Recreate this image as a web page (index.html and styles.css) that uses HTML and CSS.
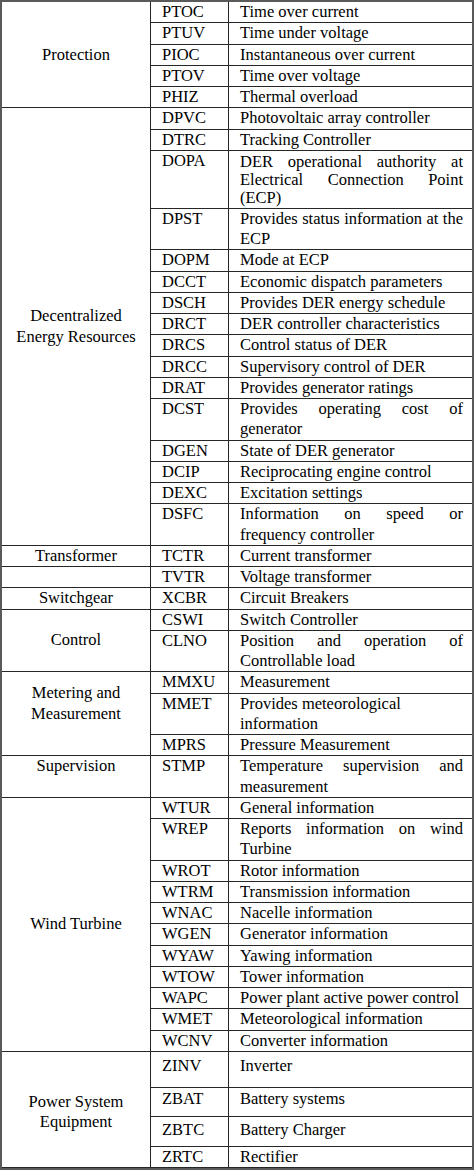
FILE: index.html
```html
<!DOCTYPE html>
<html lang="en">
<head>
<meta charset="utf-8">
<title>Logical nodes</title>
<link rel="stylesheet" href="styles.css">
</head>
<body>
<table class="ln-table">
  <colgroup>
    <col class="col-cat">
    <col class="col-code">
    <col class="col-desc">
  </colgroup>
  <tbody>
    <tr><td class="cat" rowspan="5">Protection</td><td class="code">PTOC</td><td class="desc">Time over current</td></tr>
    <tr><td class="code">PTUV</td><td class="desc">Time under voltage</td></tr>
    <tr><td class="code">PIOC</td><td class="desc">Instantaneous over current</td></tr>
    <tr><td class="code">PTOV</td><td class="desc">Time over voltage</td></tr>
    <tr><td class="code">PHIZ</td><td class="desc">Thermal overload</td></tr>

    <tr><td class="cat" rowspan="16">Decentralized Energy Resources</td><td class="code">DPVC</td><td class="desc">Photovoltaic array controller</td></tr>
    <tr><td class="code">DTRC</td><td class="desc">Tracking Controller</td></tr>
    <tr><td class="code">DOPA</td><td class="desc tight">DER operational authority at Electrical Connection Point (ECP)</td></tr>
    <tr><td class="code">DPST</td><td class="desc">Provides status information at the ECP</td></tr>
    <tr><td class="code">DOPM</td><td class="desc">Mode at ECP</td></tr>
    <tr><td class="code">DCCT</td><td class="desc">Economic dispatch parameters</td></tr>
    <tr><td class="code">DSCH</td><td class="desc">Provides DER energy schedule</td></tr>
    <tr><td class="code">DRCT</td><td class="desc">DER controller characteristics</td></tr>
    <tr><td class="code">DRCS</td><td class="desc">Control status of DER</td></tr>
    <tr><td class="code">DRCC</td><td class="desc">Supervisory control of DER</td></tr>
    <tr><td class="code">DRAT</td><td class="desc">Provides generator ratings</td></tr>
    <tr><td class="code">DCST</td><td class="desc">Provides operating cost of generator</td></tr>
    <tr><td class="code">DGEN</td><td class="desc">State of DER generator</td></tr>
    <tr><td class="code">DCIP</td><td class="desc">Reciprocating engine control</td></tr>
    <tr><td class="code">DEXC</td><td class="desc">Excitation settings</td></tr>
    <tr><td class="code">DSFC</td><td class="desc">Information on speed or frequency controller</td></tr>

    <tr><td class="cat">Transformer</td><td class="code">TCTR</td><td class="desc">Current transformer</td></tr>
    <tr><td class="cat"></td><td class="code">TVTR</td><td class="desc">Voltage transformer</td></tr>
    <tr><td class="cat">Switchgear</td><td class="code">XCBR</td><td class="desc">Circuit Breakers</td></tr>

    <tr><td class="cat" rowspan="2">Control</td><td class="code">CSWI</td><td class="desc">Switch Controller</td></tr>
    <tr><td class="code">CLNO</td><td class="desc">Position and operation of Controllable load</td></tr>

    <tr><td class="cat trail" rowspan="3">Metering and Measurement</td><td class="code">MMXU</td><td class="desc">Measurement</td></tr>
    <tr><td class="code">MMET</td><td class="desc ragged">Provides meteorological information</td></tr>
    <tr><td class="code">MPRS</td><td class="desc">Pressure Measurement</td></tr>

    <tr><td class="cat trail">Supervision</td><td class="code">STMP</td><td class="desc">Temperature supervision and measurement</td></tr>

    <tr><td class="cat" rowspan="11">Wind Turbine</td><td class="code">WTUR</td><td class="desc">General information</td></tr>
    <tr><td class="code">WREP</td><td class="desc">Reports information on wind Turbine</td></tr>
    <tr><td class="code">WROT</td><td class="desc">Rotor information</td></tr>
    <tr><td class="code">WTRM</td><td class="desc">Transmission information</td></tr>
    <tr><td class="code">WNAC</td><td class="desc">Nacelle information</td></tr>
    <tr><td class="code">WGEN</td><td class="desc">Generator information</td></tr>
    <tr><td class="code">WYAW</td><td class="desc">Yawing information</td></tr>
    <tr><td class="code">WTOW</td><td class="desc">Tower information</td></tr>
    <tr><td class="code">WAPC</td><td class="desc">Power plant active power control</td></tr>
    <tr><td class="code">WMET</td><td class="desc">Meteorological information</td></tr>
    <tr><td class="code">WCNV</td><td class="desc">Converter information</td></tr>

    <tr class="row-zinv"><td class="cat lowered" rowspan="4">Power System Equipment</td><td class="code">ZINV</td><td class="desc">Inverter</td></tr>
    <tr class="row-zbat"><td class="code">ZBAT</td><td class="desc">Battery systems</td></tr>
    <tr class="row-zbtc"><td class="code">ZBTC</td><td class="desc">Battery Charger</td></tr>
    <tr><td class="code">ZRTC</td><td class="desc">Rectifier</td></tr>
  </tbody>
</table>
</body>
</html>
```

FILE: styles.css
```css
html, body {
  margin: 0;
  padding: 0;
  background: #ffffff;
}

.ln-table {
  width: 474px;
  table-layout: fixed;
  border-collapse: separate;
  border-spacing: 0;
  border: 2px solid #5a5a5a;
  font-family: "Liberation Serif", "Times New Roman", serif;
  font-size: 16.5px;
  line-height: 20.25px;
  color: #000000;
}

.col-cat { width: 149px; }
.col-code { width: 78px; }
.col-desc { width: 243px; }

.ln-table td {
  padding: 0;
  border-bottom: 1px solid #262626;
  vertical-align: top;
}

.cat {
  border-right: 1px solid #262626;
  text-align: center;
  vertical-align: middle !important;
  padding: 0 8px !important;
}

.cat.trail {
  padding-bottom: 20.25px !important;
}

.cat.lowered {
  padding-top: 6px !important;
}

.code {
  border-right: 1px solid #262626;
  padding-left: 11px !important;
  white-space: nowrap;
}

.desc {
  padding-left: 11px !important;
  padding-right: 9px !important;
  text-align: justify;
}

.desc.ragged {
  text-align: left;
}

.desc.tight {
  line-height: 18px;
  padding-top: 2px !important;
  padding-bottom: 1px !important;
}

.row-zinv td.code,
.row-zinv td.desc {
  padding-top: 4px;
  padding-bottom: 11px;
}

.row-zbat td {
  padding-top: 1px;
  padding-bottom: 7px;
}

.row-zbtc td {
  padding-top: 3px;
  padding-bottom: 5px;
}
```
